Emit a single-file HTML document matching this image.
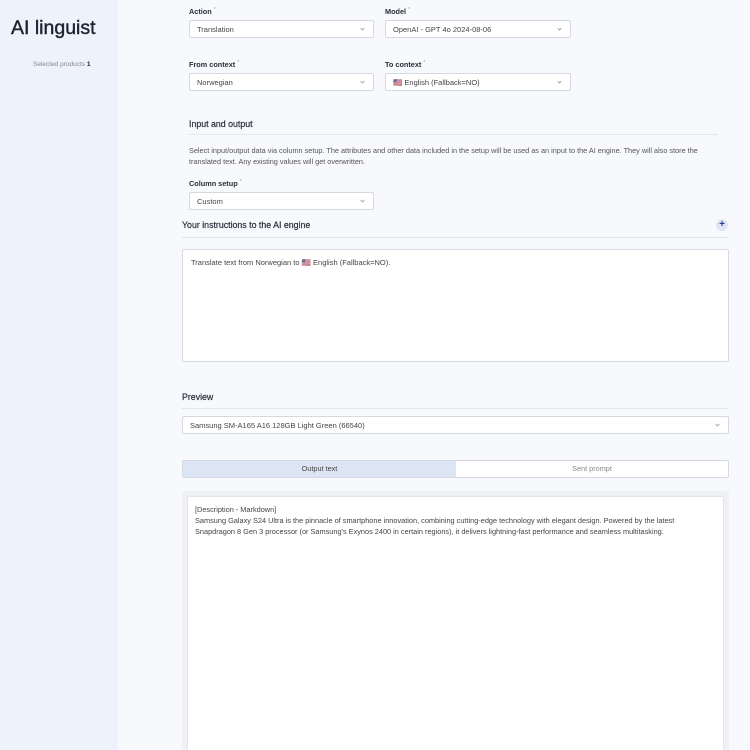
<!DOCTYPE html>
<html><head><meta charset="utf-8"><style>
*{box-sizing:border-box;margin:0;padding:0}
html,body{width:750px;height:750px;overflow:hidden}
body{background:#f8f9fc;font-family:"Liberation Sans",sans-serif;color:#2a2f3a;position:relative}
.side{position:absolute;left:0;top:0;width:118px;height:750px;background:#eef2fb}
.side h1{position:absolute;left:11px;top:17px;font-size:19.5px;font-weight:normal;color:#1d2230;-webkit-text-stroke:0.4px #1d2230}
.side .sel{position:absolute;left:33px;top:61px;font-size:6.5px;color:#888}
.side .sel b{color:#222}
.abs{position:absolute}
.lbl{font-size:7.3px;font-weight:bold;color:#2a2f3a}
.lbl i{font-style:normal;color:#999;font-weight:normal;font-size:5px;vertical-align:top}
.sel-box{position:absolute;height:18px;background:#fff;border:1px solid #d6d9e0;border-radius:2px;font-size:7.5px;color:#444;padding:5px 7px;line-height:7px}
.sel-box:after{content:"";position:absolute;right:9px;top:6px;width:2px;height:2px;border-right:1px solid #aaa;border-bottom:1px solid #aaa;transform:rotate(45deg)}
.h{font-size:8.8px;color:#2a2f3a;-webkit-text-stroke:0.2px #2a2f3a}
.line{position:absolute;height:1px;background:#e3e5ea}
.p{font-size:7.3px;color:#555;line-height:11px}
</style></head><body>
<div class="side"><h1>AI linguist</h1><div class="sel">Selected products <b>1</b></div></div>

<div class="abs lbl" style="left:189px;top:7px">Action <i>*</i></div>
<div class="sel-box" style="left:189px;top:20px;width:185px">Translation</div>
<div class="abs lbl" style="left:385px;top:7px">Model <i>*</i></div>
<div class="sel-box" style="left:385px;top:20px;width:186px">OpenAI - GPT 4o 2024-08-06</div>

<div class="abs lbl" style="left:189px;top:60px">From context <i>*</i></div>
<div class="sel-box" style="left:189px;top:73px;width:185px">Norwegian</div>
<div class="abs lbl" style="left:385px;top:60px">To context <i>*</i></div>
<div class="sel-box" style="left:385px;top:73px;width:186px">🇺🇸 English (Fallback=NO)</div>

<div class="abs h" style="left:189px;top:119px">Input and output</div>
<div class="line" style="left:189px;top:134px;width:529px"></div>
<div class="abs p" style="left:189px;top:145px;width:535px">Select input/output data via column setup. The attributes and other data included in the setup will be used as an input to the AI engine. They will also store the translated text. Any existing values will get overwritten.</div>

<div class="abs lbl" style="left:189px;top:179px">Column setup <i>*</i></div>
<div class="sel-box" style="left:189px;top:192px;width:185px">Custom</div>

<div class="abs h" style="left:182px;top:220px">Your instructions to the AI engine</div>
<div class="abs" style="left:716px;top:219px;width:12px;height:12px;border-radius:50%;background:#dfe5f4;color:#2b3f8c;font-size:10px;font-weight:bold;text-align:center;line-height:12px">+</div>
<div class="line" style="left:182px;top:237px;width:547px"></div>
<div class="abs" style="left:182px;top:249px;width:547px;height:113px;background:#fff;border:1px solid #d6d9e0;border-radius:2px;font-size:7.5px;color:#444;padding:8px 8px">Translate text from Norwegian to 🇺🇸 English (Fallback=NO).</div>

<div class="abs h" style="left:182px;top:392px">Preview</div>
<div class="line" style="left:182px;top:408px;width:547px"></div>
<div class="sel-box" style="left:182px;top:416px;width:547px">Samsung SM-A165 A16 128GB Light Green (66540)</div>

<div class="abs" style="left:182px;top:460px;width:547px;height:18px;border:1px solid #d6d9e0;border-radius:2px;background:#fff;font-size:7.3px">
<div class="abs" style="left:0;top:0;width:273px;height:16px;background:#dce5f4;text-align:center;line-height:16px;color:#444">Output text</div>
<div class="abs" style="left:273px;top:0;width:272px;height:16px;text-align:center;line-height:16px;color:#888">Sent prompt</div>
</div>

<div class="abs" style="left:182px;top:491px;width:547px;height:259px;background:#f0f1f5;border-radius:3px 3px 0 0"></div>
<div class="abs" style="left:187px;top:496px;width:537px;height:254px;background:#fff;border:1px solid #e3e5ea;border-bottom:none;border-radius:2px 2px 0 0;padding:7px 7px;font-size:7.35px;line-height:11.2px;color:#444">[Description - Markdown]<br>Samsung Galaxy S24 Ultra is the pinnacle of smartphone innovation, combining cutting-edge technology with elegant design. Powered by the latest Snapdragon 8 Gen 3 processor (or Samsung's Exynos 2400 in certain regions), it delivers lightning-fast performance and seamless multitasking.</div>
</body></html>
